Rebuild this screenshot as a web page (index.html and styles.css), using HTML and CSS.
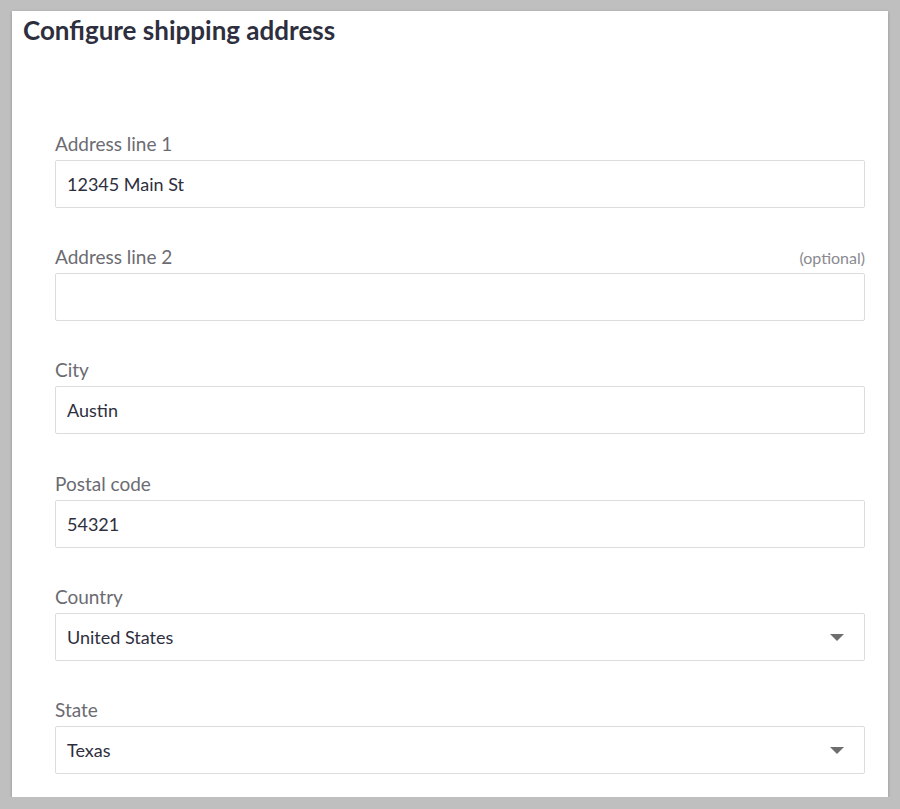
FILE: index.html
```html
<!DOCTYPE html>
<html>
	<head>
		<title>Shipping address</title>
		<link rel="stylesheet" href="styles.css">
	</head>
	<body>
		<div class="card">
			<h1 class="card-title">Configure shipping address</h1>
			<form class="address-form">
				<div class="field">
					<div class="field-head"><label>Address line 1</label></div>
					<input class="field-input" type="text" value="12345 Main St">
				</div>
				<div class="field">
					<div class="field-head"><label>Address line 2</label><span class="optional">(optional)</span></div>
					<input class="field-input" type="text" value="">
				</div>
				<div class="field">
					<div class="field-head"><label>City</label></div>
					<input class="field-input" type="text" value="Austin">
				</div>
				<div class="field">
					<div class="field-head"><label>Postal code</label></div>
					<input class="field-input" type="text" value="54321">
				</div>
				<div class="field">
					<div class="field-head"><label>Country</label></div>
					<div class="select">
						<span>United States</span>
						<span class="caret"></span>
					</div>
				</div>
				<div class="field">
					<div class="field-head"><label>State</label></div>
					<div class="select">
						<span>Texas</span>
						<span class="caret"></span>
					</div>
				</div>
			</form>
		</div>
	</body>
</html>
```

FILE: styles.css
```css
body {
	margin: 0;
	background-color: #bfbfbf;
	font-family: Lato, "Liberation Sans", sans-serif;
	color: #2e2f3e;
}

.card {
	background: #fff;
	margin: 11px 12px 0;
	height: 786px;
	box-sizing: border-box;
	padding: 4px 11px 0;
	box-shadow: 0 1px 3px rgba(0, 0, 0, 0.25);
}

.card-title {
	margin: 0;
	font-size: 26px;
	font-weight: 700;
	line-height: 30px;
	color: #2e2f3e;
}

.address-form {
	display: flex;
	flex-direction: column;
	gap: 37.4px;
	padding: 86.5px 12px 0 32px;
}

.field-head {
	display: flex;
	justify-content: space-between;
	align-items: baseline;
	height: 24px;
	line-height: 24px;
	margin-bottom: 4px;
}

.field-head label {
	font-size: 19px;
	color: #6b6b72;
}

.optional {
	font-size: 16px;
	color: #8a8a90;
}

.field-input,
.select {
	display: flex;
	align-items: center;
	box-sizing: border-box;
	width: 100%;
	height: 48px;
	margin: 0;
	padding: 0 11px;
	border: 1px solid #dcdcdc;
	border-radius: 2px;
	background: #fff;
	font-family: inherit;
	font-size: 18px;
	color: #2e2f3e;
	outline: none;
}

.select {
	justify-content: space-between;
	padding-right: 20px;
}

.caret {
	width: 0;
	height: 0;
	border-left: 7px solid transparent;
	border-right: 7px solid transparent;
	border-top: 7px solid #6e6e6e;
}
```
